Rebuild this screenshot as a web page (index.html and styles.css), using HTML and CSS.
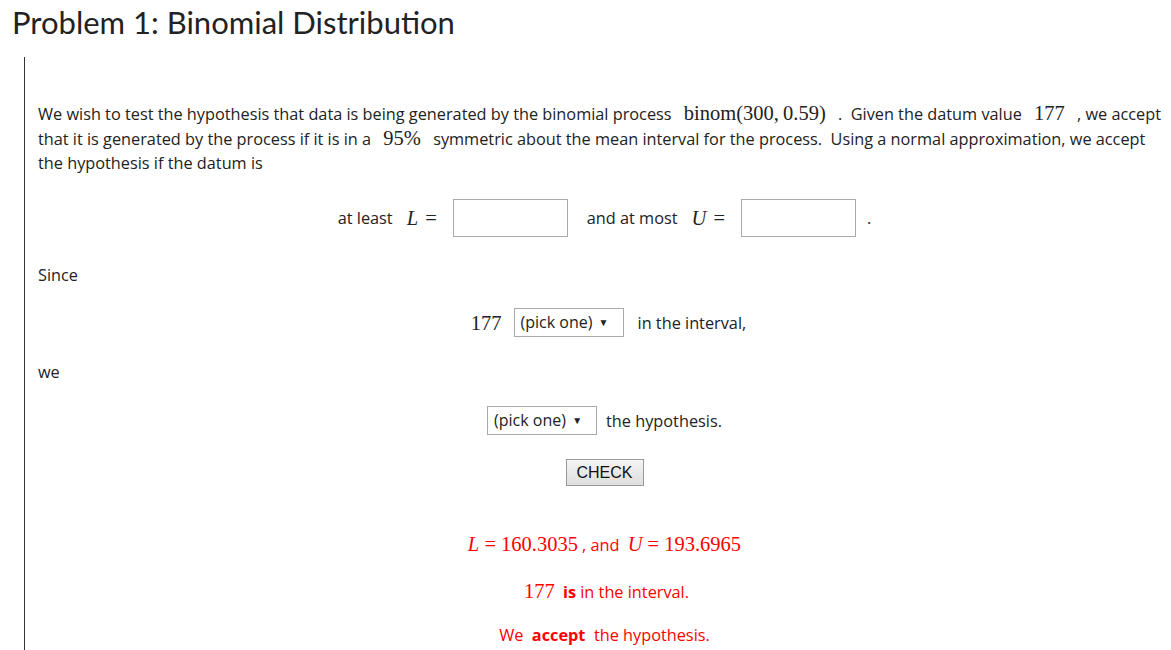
FILE: index.html
```html
<!DOCTYPE html>
<html>
<head>
<meta charset="utf-8">
<link rel="stylesheet" href="styles.css">
</head>
<body>
<h1 class="title">Problem 1: Binomial Distribution</h1>
<div class="problem">
  <p class="intro">We wish to test the hypothesis that data is being generated by the binomial process <span class="math">binom(300,&#8201;0.59)</span> . &nbsp;Given the datum value <span class="math">177</span> , we accept that it is generated by the process if it is in a <span class="math">95%</span> symmetric about the mean interval for the process. &nbsp;Using a normal approximation, we accept the hypothesis if the datum is</p>
  <div class="row row-bounds">
    <span>at least</span><span class="math bmath"><i>L</i> =</span><input class="num" type="text"><span class="gap"></span><span>and at most</span><span class="math bmath"><i>U</i> =</span><input class="num" type="text"><span class="dot">.</span>
  </div>
  <p class="label label-since">Since</p>
  <div class="row row-interval">
    <span class="math">177</span><span class="select">(pick one) <span class="caret">▼</span></span><span>in the interval,</span>
  </div>
  <p class="label label-we">we</p>
  <div class="row row-hyp">
    <span class="select">(pick one) <span class="caret">▼</span></span><span>the hypothesis.</span>
  </div>
  <div class="row row-check"><button class="check">CHECK</button></div>
  <div class="answers">
    <p class="ans ans1"><span class="math"><i>L</i> = 160.3035</span>, and <span class="math"><i>U</i> = 193.6965</span></p>
    <p class="ans ans2"><span class="math">177</span> <b>is</b> in the interval.</p>
    <p class="ans ans3">We &nbsp;<b>accept</b> &nbsp;the hypothesis.</p>
  </div>
</div>
</body>
</html>
```
FILE: styles.css
```css
html, body {
  margin: 0;
  padding: 0;
  background: #fff;
}
body {
  font-family: "Open Sans", "Noto Sans", sans-serif;
  color: #222;
  padding: 0 0 0 12px;
  overflow: hidden;
}
.title {
  font-family: Lato, "Open Sans", sans-serif;
  font-weight: 400;
  font-size: 31px;
  line-height: 40px;
  margin: 2px 0 15px 0;
  color: #222;
}
.problem {
  margin-left: 12px;
  border-left: 1px solid #333;
  padding: 44px 0 20px 13px;
  font-size: 16.3px;
  line-height: 24px;
}
.intro {
  margin: 0;
}
.math {
  font-family: "Liberation Serif", "DejaVu Serif", serif;
  font-size: 20.5px;
  color: #222;
  padding: 0 8px;
}
.math i {
  font-style: italic;
}
.row {
  display: flex;
  justify-content: center;
  align-items: center;
}
.row-bounds {
  margin-top: 24px;
}
.bmath {
  padding: 0 10px 0 14px;
  word-spacing: 2px;
}
.num {
  width: 115px;
  height: 38px;
  box-sizing: border-box;
  border: 1px solid #aaa;
  margin: 0 0 0 6px;
  padding: 0;
}
.gap {
  width: 19px;
}
.dot {
  margin-left: 11px;
}
.label {
  margin: 0;
}
.label-since {
  margin-top: 26px;
}
.row-interval {
  margin-top: 21px;
}
.select {
  display: inline-block;
  box-sizing: border-box;
  width: 110px;
  height: 29px;
  line-height: 27px;
  border: 1px solid #aaa;
  padding-left: 6px;
  font-size: 16px;
  margin: 0 14px 0 4px;
  color: #222;
  white-space: nowrap;
}
.caret {
  font-size: 10px;
  padding-left: 2px;
  vertical-align: 2px;
}
.label-we {
  margin-top: 23px;
}
.row-hyp {
  margin-top: 22px;
}
.row-hyp .select {
  margin-left: 0;
  margin-right: 9px;
}
.row-check {
  margin-top: 24px;
}
.check {
  width: 78px;
  height: 27px;
  font-family: "Liberation Sans", Arial, sans-serif;
  font-size: 16px;
  border: 1px solid #999;
  background: linear-gradient(#f4f4f4, #dedede);
  color: #111;
  padding: 0;
}
.answers {
  color: #ff0000;
  text-align: center;
}
.answers .math {
  color: #ff0000;
  padding: 0 4px;
}
.ans {
  margin: 0;
  line-height: 24px;
}
.ans1 {
  margin-top: 46px;
}
.ans2 {
  margin-top: 22px;
}
.ans3 {
  margin-top: 19px;
}
```
